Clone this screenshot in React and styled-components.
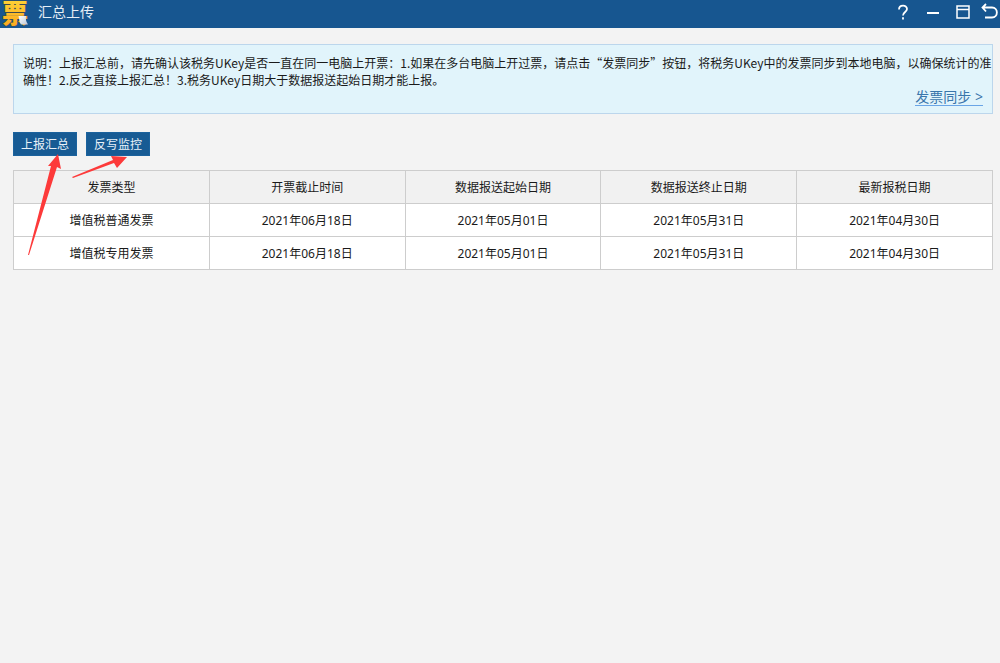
import React from "react";
import styled, { createGlobalStyle } from "styled-components";

const GlobalStyle = createGlobalStyle`
  * {
    box-sizing: border-box;
  }
  body {
    margin: 0;
    background: #f3f3f3;
    color: #1a1a1a;
    font-family: "Noto Sans", "Noto Sans CJK SC", sans-serif;
    font-size: 12px;
  }
`;

const Page = styled.div`
  position: relative;
  min-height: 100vh;
`;

const TitleBar = styled.header`
  display: flex;
  align-items: center;
  height: 28px;
  padding-left: 2px;
  background: #175690;
  color: #fff;
`;

const Logo = styled.svg`
  width: 28px;
  height: 28px;
  overflow: visible;
`;

const Title = styled.h1`
  margin: 0 auto 0 8px;
  padding-bottom: 4px;
  color: #e6eef6;
  font-size: 14px;
  font-weight: 400;
  line-height: 24px;
`;

const WindowButton = styled.button`
  display: flex;
  align-items: center;
  justify-content: center;
  width: ${(props) => (props.$last ? "22px" : "30px")};
  height: 28px;
  padding: 0;
  border: 0;
  background: none;
  color: #fff;
`;

const WindowIcon = styled.svg`
  width: 20px;
  height: 28px;
  fill: none;
  stroke: currentColor;
`;

const Content = styled.main`
  padding: 16px 7px 16px 13px;
`;

const Notice = styled.section`
  padding: 9px 0 7px 9px;
  border: 1px solid #bcd6ec;
  background: #e1f4fb;
`;

const NoticeText = styled.p`
  margin: 0;
  font-family: "Noto Sans CJK SC", sans-serif;
  line-height: 17px;
`;

const SyncLink = styled.a`
  display: block;
  width: fit-content;
  margin: 0 9px 0 auto;
  border-bottom: 1px solid #6aa5e6;
  color: #3a76ab;
  font-size: 14px;
  line-height: 17px;
  text-decoration: none;
`;

const Actions = styled.div`
  display: flex;
  gap: 9px;
  margin: 18px 0 14px;
`;

const ActionButton = styled.button`
  height: 24px;
  padding: 1px 7px 0;
  border: 1px solid #1b629d;
  background: #175b94;
  color: #e8f1f8;
  font: inherit;
  line-height: 21px;
`;

const Table = styled.table`
  width: 100%;
  border-collapse: collapse;
  table-layout: fixed;
  background: #fff;

  th,
  td {
    height: 33px;
    padding: 0;
    border: 1px solid #cdcdcd;
    font-weight: 400;
    text-align: center;
  }

  th {
    background: #f1f1f1;
  }
`;

// sits over the buttons and the table
const Arrows = styled.svg`
  position: absolute;
  top: 150px;
  left: 20px;
  width: 120px;
  height: 110px;
  fill: #fd3a3a;
  pointer-events: none;
`;

const columns = [
  "发票类型",
  "开票截止时间",
  "数据报送起始日期",
  "数据报送终止日期",
  "最新报税日期",
];

const rows = [
  ["增值税普通发票", "2021年06月18日", "2021年05月01日", "2021年05月31日", "2021年04月30日"],
  ["增值税专用发票", "2021年06月18日", "2021年05月01日", "2021年05月31日", "2021年04月30日"],
];

const TicketLogo = () => (
  <Logo viewBox="0 0 28 28" aria-hidden="true">
    <defs>
      <linearGradient id="gold" x1="0" y1="0" x2="0" y2="1">
        <stop offset="0" stopColor="#ffdc3c" />
        <stop offset="1" stopColor="#fba41c" />
      </linearGradient>
      <linearGradient id="paper" x1="0" y1="0" x2="1" y2="1">
        <stop offset="0" stopColor="#ffffff" />
        <stop offset="1" stopColor="#b9c6d8" />
      </linearGradient>
    </defs>
    <text
      x="13"
      y="23"
      textAnchor="middle"
      fontFamily="Noto Sans CJK SC, sans-serif"
      fontSize="26"
      fontWeight="900"
      fill="url(#gold)"
      stroke="#3d4a50"
      strokeWidth="1"
      paintOrder="stroke"
    >
      票
    </text>
    <path d="M16.5 16H24c-.6 3 .2 6 2 8.500h-7c-.8-1-1.200-2-1.400-3.200z" fill="url(#paper)" />
  </Logo>
);

const App = () => {
  return (
    <>
      <GlobalStyle />
      <Page lang="zh-CN">
        <TitleBar>
          <TicketLogo />
          <Title>汇总上传</Title>
          <WindowButton aria-label="帮助">
            <WindowIcon viewBox="0 0 20 28" strokeWidth="1.8">
              <path d="M6 9.5C6 4.5 14 4.5 14 9C14 12 10 12 10 15.5M10 17.2V19.5" />
            </WindowIcon>
          </WindowButton>
          <WindowButton aria-label="最小化">
            <WindowIcon viewBox="0 0 20 28" strokeWidth="2">
              <path d="M4 13H16" />
            </WindowIcon>
          </WindowButton>
          <WindowButton aria-label="最大化">
            <WindowIcon viewBox="0 0 20 28" strokeWidth="1.5">
              <path d="M4 6H16V18H4zM4 9.5H16" />
            </WindowIcon>
          </WindowButton>
          <WindowButton $last aria-label="返回">
            <WindowIcon viewBox="0 0 20 28" strokeWidth="1.8">
              <path d="M7 4L3.500 7.5L7 11.5M4 7.5H13C19.5 7.5 19.5 17.5 13 17.5H6" />
            </WindowIcon>
          </WindowButton>
        </TitleBar>

        <Content>
          <Notice>
            <NoticeText>
              说明：上报汇总前，请先确认该税务UKey是否一直在同一电脑上开票：1.如果在多台电脑上开过票，请点击“发票同步”按钮，将税务UKey中的发票同步到本地电脑，以确保统计的准确性！2.反之直接上报汇总！3.税务UKey日期大于数据报送起始日期才能上报。
            </NoticeText>
            <SyncLink href="#sync">发票同步 &gt;</SyncLink>
          </Notice>

          <Actions>
            <ActionButton>上报汇总</ActionButton>
            <ActionButton>反写监控</ActionButton>
          </Actions>

          <Table>
            <thead>
              <tr>
                {columns.map((column) => (
                  <th key={column} scope="col">
                    {column}
                  </th>
                ))}
              </tr>
            </thead>
            <tbody>
              {rows.map((row) => (
                <tr key={row[0]}>
                  {row.map((cell, i) => (
                    <td key={i}>{cell}</td>
                  ))}
                </tr>
              ))}
            </tbody>
          </Table>
        </Content>

        <Arrows viewBox="20 150 120 110" aria-hidden="true">
          <path d="M58 154L61 169L57 167L29 255L28 255L51 166L48 166z" />
          <path d="M127 157L117 168L114 163L73 178L72 177L113 160L111 156z" />
        </Arrows>
      </Page>
    </>
  );
};

export default App;
